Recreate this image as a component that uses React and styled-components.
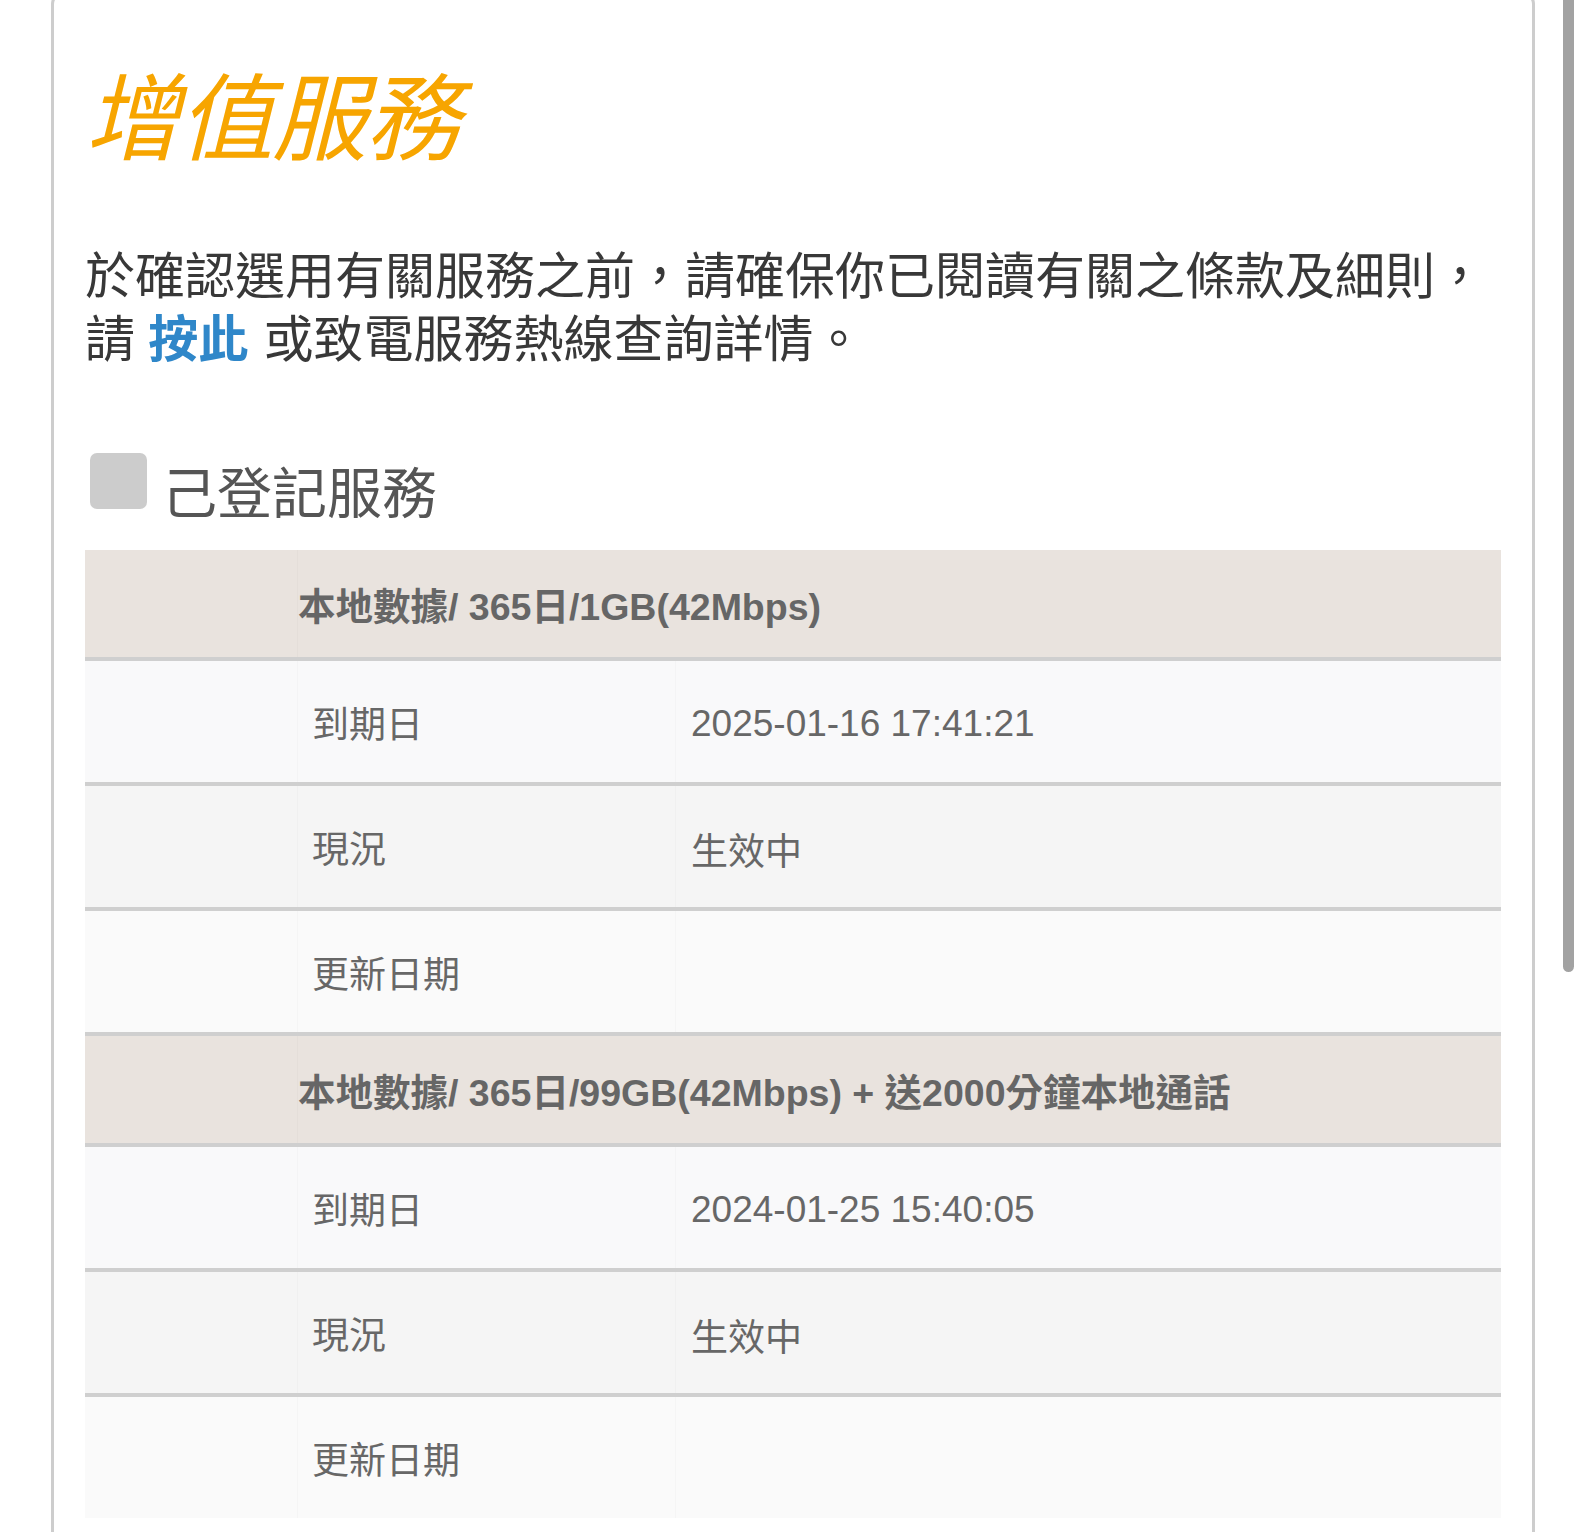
import React from "react";
import styled, { createGlobalStyle } from "styled-components";

const GlobalStyle = createGlobalStyle`
  html, body {
    margin: 0;
    padding: 0;
    background: #ffffff;
  }
  #root {
    height: 1532px;
    overflow: hidden;
    position: relative;
  }
  body {
    font-family: "Liberation Sans", "Noto Sans CJK TC", sans-serif;
  }
`;

const Page = styled.div`
  padding-left: 51px;
  width: 1484px;
`;

const Card = styled.div`
  margin-top: -8px;
  border: 3px solid #cdcdcd;
  border-bottom: none;
  border-radius: 12px 12px 0 0;
  padding: 61px 31px 60px 31px;
  background: #fff;
`;

const Title = styled.h1`
  margin: 0;
  font-family: "Noto Sans CJK TC", sans-serif;
  font-size: 95px;
  line-height: 111px;
  font-weight: 400;
  font-style: italic;
  color: #f7a500;
  letter-spacing: -1.5px;
`;

const Intro = styled.p`
  margin: 74px 0 0 0;
  font-family: "Noto Sans CJK TC", sans-serif;
  font-size: 50px;
  line-height: 63px;
  color: #383838;
`;

const Sentence = styled.span``;

const Link = styled.a`
  color: #2f87c9;
  font-weight: 700;
  text-decoration: none;
  padding: 0 4px 0 2px;
`;

const SectionHead = styled.div`
  display: flex;
  align-items: flex-start;
  gap: 15px;
  margin-top: 86px;
  padding-left: 5px;
`;

const Marker = styled.span`
  width: 57px;
  height: 56px;
  border-radius: 7px;
  background: #cccccc;
  flex: none;
`;

const SectionTitle = styled.h2`
  margin: 0;
  font-family: "Noto Sans CJK TC", sans-serif;
  font-size: 55px;
  line-height: 72px;
  font-weight: 400;
  color: #555555;
`;

const Table = styled.div`
  margin-top: 25px;
  display: flex;
  flex-direction: column;
`;

const Row = styled.div`
  display: grid;
  grid-template-columns: 212px 378px 1fr;
  height: ${(p) => (p.$head ? "107px" : "121px")};
  background: ${(p) => p.$bg};
  border-bottom: ${(p) => (p.$last ? "none" : "4px solid #cfcfcf")};
  color: #676767;
  font-size: 37px;
`;

const Cell = styled.div`
  display: flex;
  align-items: center;
  padding-left: ${(p) => p.$pad || "0px"};
  padding-top: ${(p) => p.$nudge || "0px"};
  border-left: ${(p) => (p.$first ? "none" : "1px solid rgba(0,0,0,0.018)")};
  white-space: nowrap;
  grid-column: ${(p) => p.$span || "auto"};
`;

const HeadText = styled.span`
  font-weight: 700;
  font-size: 37.5px;
  color: #666666;
`;

const Scrollbar = styled.div`
  position: absolute;
  top: -6px;
  left: 1563px;
  width: 11px;
  height: 978px;
  border-radius: 6px;
  background: #a2a2a2;
`;

const services = [
  {
    name: "本地數據/ 365日/1GB(42Mbps)",
    expiry: "2025-01-16 17:41:21",
    status: "生效中",
    updated: "",
  },
  {
    name: "本地數據/ 365日/99GB(42Mbps) + 送2000分鐘本地通話",
    expiry: "2024-01-25 15:40:05",
    status: "生效中",
    updated: "",
  },
];

const rowBgs = ["#f9f9fa", "#f5f5f5", "#fafafa"];

export default function App() {
  return (
    <>
      <GlobalStyle />
      <Page>
        <Card>
          <Title>增值服務</Title>
          <Intro>
            <Sentence>於確認選用有關服務之前，請確保你已閱讀有關之條款及細則，</Sentence>
            <Sentence>請 </Sentence>
            <Link href="#">按此</Link>
            <Sentence> 或致電服務熱線查詢詳情。</Sentence>
          </Intro>
          <SectionHead>
            <Marker />
            <SectionTitle>己登記服務</SectionTitle>
          </SectionHead>
          <Table>
            {services.map((s, i) => {
              const rows = [
                ["到期日", s.expiry],
                ["現況", s.status],
                ["更新日期", s.updated],
              ];
              return (
                <React.Fragment key={i}>
                  <Row $head $bg="#e9e3de">
                    <Cell $first />
                    <Cell $span="2 / 4">
                      <HeadText>{s.name}</HeadText>
                    </Cell>
                  </Row>
                  {rows.map(([label, value], j) => (
                    <Row
                      key={label}
                      $bg={rowBgs[j]}
                      $last={i === services.length - 1 && j === rows.length - 1}
                    >
                      <Cell $first />
                      <Cell $pad="14px">{label}</Cell>
                      <Cell $pad="15px" $nudge="5px">{value}</Cell>
                    </Row>
                  ))}
                </React.Fragment>
              );
            })}
          </Table>
        </Card>
      </Page>
      <Scrollbar />
    </>
  );
}
